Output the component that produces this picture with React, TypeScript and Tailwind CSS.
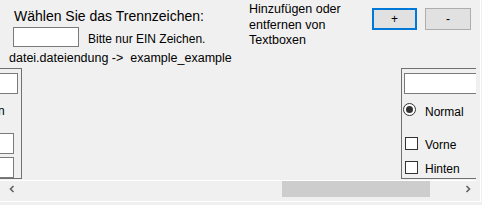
import React from 'react';

const frame = 'border-[#707070]';

function Chevron({ dir }: { dir: 'left' | 'right' }) {
  return (
    <svg width="8" height="8" viewBox="0 0 8 8" fill="none">
      <path
        d={dir === 'left' ? 'M5.5 1 L2.5 4 L5.5 7' : 'M2.5 1 L5.5 4 L2.5 7'}
        stroke="#606060"
        strokeWidth="1.6"
      />
    </svg>
  );
}

function LeftGroup() {
  return (
    <div className={`w-[22px] h-[111px] border-t border-r border-b ${frame} flex flex-col items-end`}>
      <div className="mt-[4px] mr-[3px] w-[18px] h-[21px] bg-white border-y border-r border-[#7a7a7a]" />
      <div className="self-start mt-[10px] h-[14px] leading-[14px] ml-[-2px]">n</div>
      <div className="self-start mt-[15px] w-[14px] h-[21px] bg-white border-y border-r border-[#7a7a7a]" />
      <div className="self-start mt-[3px] w-[14px] h-[21px] bg-white border-y border-r border-[#7a7a7a]" />
    </div>
  );
}

function RightGroup() {
  return (
    <div className={`w-[75px] h-[111px] border-t border-l border-b ${frame} flex flex-col pl-[2px]`}>
      <div className="mt-[4px] w-[80px] h-[21px] bg-white border-y border-l border-[#7a7a7a]" />
      <div className="mt-[9px] ml-[-1px] flex items-start">
        <div className="w-[13px] h-[13px] rounded-full border border-[#333333] bg-white flex items-center justify-center">
          <div className="w-[7px] h-[7px] rounded-full bg-[#333333]" />
        </div>
        <span className="ml-[9px] mt-[2px] leading-[14px] whitespace-nowrap">Normal</span>
      </div>
      <div className="mt-[18px] ml-[1px] flex items-start">
        <div className="w-[13px] h-[13px] border border-[#333333] bg-white" />
        <span className="ml-[7px] mt-[1px] leading-[14px] whitespace-nowrap">Vorne</span>
      </div>
      <div className="mt-[9px] ml-[1px] flex items-start">
        <div className="w-[13px] h-[13px] border border-[#333333] bg-white" />
        <span className="ml-[7px] mt-[1px] leading-[14px] whitespace-nowrap">Hinten</span>
      </div>
    </div>
  );
}

export default function App() {
  return (
    <div className="w-[482px] h-[205px] bg-[#f0f0f0] text-black text-[12px] font-['Liberation_Sans',Arial,sans-serif] overflow-hidden">
      <div className="w-[481px] h-[202px] border-r border-b border-white flex flex-col">
        <div className="w-[476px] h-[180px] overflow-hidden flex flex-col">
          <div className="h-[68px] flex">
            <div className="w-[249px] pl-[9px] flex flex-col">
              <div className="mt-[8px] ml-[5px] text-[14px] leading-[16px] whitespace-nowrap">
                Wählen Sie das Trennzeichen:
              </div>
              <div className="mt-[3px] ml-[4px] flex items-start">
                <div className="w-[66px] h-[20px] bg-white border border-[#7a7a7a]" />
                <span className="ml-[9px] mt-[5px] leading-[14px] whitespace-nowrap">Bitte nur EIN Zeichen.</span>
              </div>
              <div className="mt-[4px] text-[12.5px] leading-[14px] whitespace-pre">datei.dateiendung -&gt;  example_example</div>
            </div>
            <div className="w-[123px] pt-[2px] text-[12.5px] leading-[15.5px]">
              Hinzufügen oder
              <br />
              entfernen von
              <br />
              Textboxen
            </div>
            <div className="pt-[8px] flex items-start gap-[8px]">
              <button className="w-[45px] h-[22px] bg-[#e1e1e1] border-2 border-[#0078d7] flex items-center justify-center leading-none">
                +
              </button>
              <button className="w-[46px] h-[22px] bg-[#e1e1e1] border border-[#adadad] flex items-center justify-center leading-none">
                -
              </button>
            </div>
          </div>
          <div className="flex justify-between items-start">
            <LeftGroup />
            <RightGroup />
          </div>
        </div>
        <div className="w-[476px] h-[21px] border-t border-white pl-[3px] flex items-start">
          <div className="w-[17px] h-[16px] flex items-center justify-center">
            <Chevron dir="left" />
          </div>
          <div className="flex-1 h-[16px] flex">
            <div className="ml-[262px] w-[148px] h-[16px] bg-[#cdcdcd]" />
          </div>
          <div className="w-[17px] h-[16px] flex items-center justify-center">
            <Chevron dir="right" />
          </div>
        </div>
      </div>
    </div>
  );
}
